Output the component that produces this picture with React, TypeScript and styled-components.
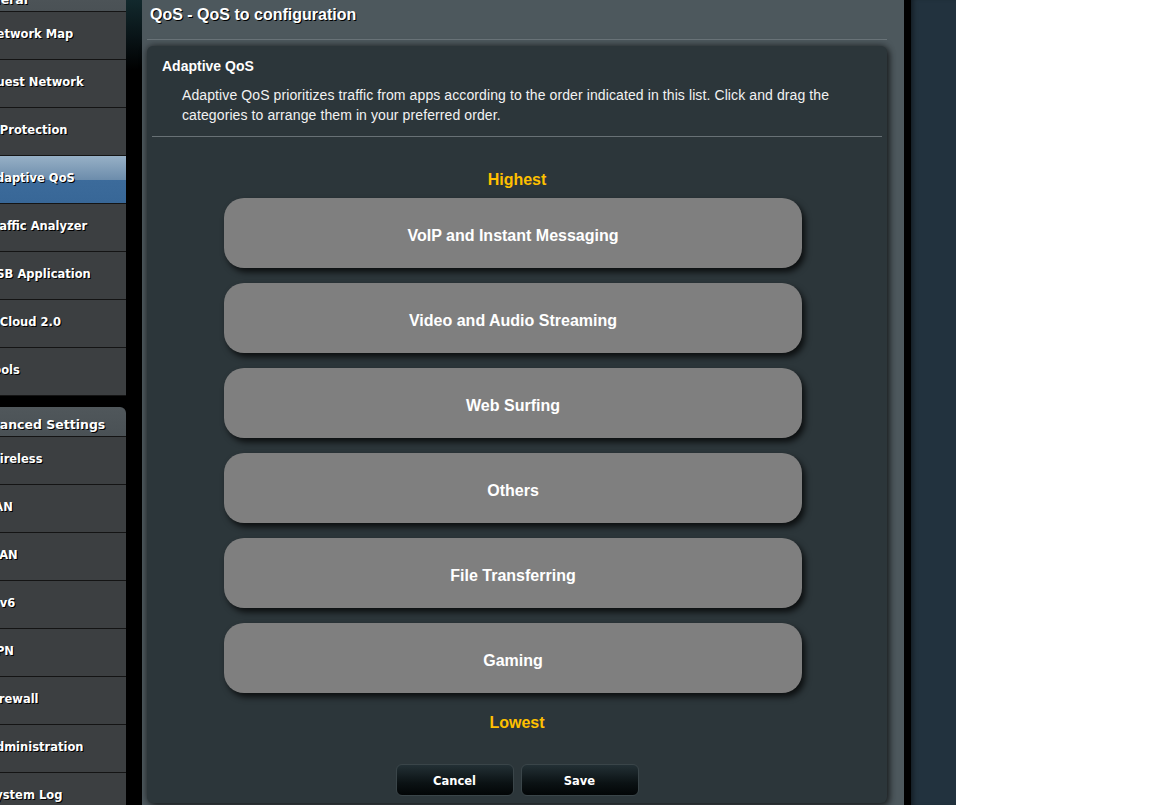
import styled, { createGlobalStyle } from "styled-components";

const GlobalStyle = createGlobalStyle`
  html, body {
    margin: 0;
    padding: 0;
    background: #ffffff;
    overflow: hidden;
  }
`;

const Page = styled.div`
  display: flex;
  width: 956px;
  height: 805px;
  overflow: hidden;
  background: #000;
`;

// ---- left menu ----

const Sidebar = styled.nav`
  width: 126px;
  flex-shrink: 0;
  overflow: hidden;
  display: flex;
  flex-direction: column;
  font-family: "DejaVu Sans", Verdana, sans-serif;
  font-weight: bold;
  color: #fff;
  text-shadow: 1px 1px 0 #000;
`;

const MenuHeader = styled.div<{ $first?: boolean }>`
  flex-shrink: 0;
  height: 29px;
  margin-top: ${(p) => (p.$first ? "-18px" : "0")};
  background: linear-gradient(#50575b, #4a5155);
  border-top-right-radius: 6px;
  border-bottom: 1px solid #141414;
  display: flex;
  align-items: center;
  font-size: 12.5px;
  white-space: nowrap;
  overflow: hidden;
`;

const HeaderLabel = styled.span`
  margin-left: -27px;
  padding-top: 5px;
`;

const MenuItem = styled.div<{ $active?: boolean }>`
  flex-shrink: 0;
  height: 47px;
  border-bottom: 1px solid #141414;
  background: ${(p) =>
    p.$active
      ? "linear-gradient(#97b0c6 0%, #6d8dac 50%, #3c6b9b 50%, #386797 100%)"
      : "#3c3f41"};
  display: flex;
  align-items: center;
  font-size: 11.5px;
  white-space: nowrap;
  overflow: hidden;
`;

const ItemLabel = styled.span`
  margin-left: -13px;
  padding-bottom: 4px;
`;

const MenuGap = styled.div`
  flex-shrink: 0;
  height: 11px;
`;

const Gutter = styled.div`
  width: 16px;
  flex-shrink: 0;
  background: linear-gradient(#12292d 0px, #081215 40px, #000 70px);
`;

// ---- main panel ----

const Panel = styled.main`
  width: 762px;
  flex-shrink: 0;
  box-sizing: border-box;
  padding: 0 17px 0 5px;
  background: #4d585d;
  font-family: "Liberation Sans", Arial, sans-serif;
  color: #fff;
`;

const TitleBar = styled.div`
  height: 40px;
  box-sizing: border-box;
  padding: 6px 0 0 3px;
  border-bottom: 1px solid #6a7479;
  font-size: 16px;
  font-weight: bold;
  text-shadow: 1px 1px 0 #000;
`;

const Card = styled.section`
  margin-top: 6px;
  background: #2c363a;
  border-radius: 6px;
  box-shadow: 0 0 7px rgba(0, 0, 0, 0.55), 3px 3px 6px rgba(0, 0, 0, 0.45);
  padding: 11px 5px 7px;
  display: flex;
  flex-direction: column;
`;

const CardTitle = styled.div`
  padding-left: 10px;
  font-size: 14px;
  font-weight: bold;
  line-height: 18px;
`;

const Description = styled.p`
  margin: 10px 0 0;
  padding: 0 45px 0 30px;
  font-size: 14px;
  line-height: 20px;
  letter-spacing: 0.1px;
  color: #f2f2f2;
`;

const Divider = styled.hr`
  margin: 11px 0 0;
  border: 0;
  border-top: 1px solid #687175;
`;

const PriorityList = styled.div`
  display: flex;
  flex-direction: column;
  align-items: center;
`;

const Bound = styled.div<{ $gap: number }>`
  margin-top: ${(p) => p.$gap}px;
  font-size: 16px;
  font-weight: bold;
  line-height: 20px;
  color: #ffc000;
`;

const CategoryStack = styled.div`
  margin-top: 8px;
  display: flex;
  flex-direction: column;
  gap: 15px;
`;

const Category = styled.div`
  width: 578px;
  height: 70px;
  box-sizing: border-box;
  padding-top: 6px;
  margin-right: 8px;
  border-radius: 20px;
  background: #7f7f7f;
  box-shadow: 3px 4px 6px rgba(0, 0, 0, 0.75);
  display: flex;
  align-items: center;
  justify-content: center;
  font-size: 16px;
  font-weight: bold;
  color: #fff;
  cursor: move;
`;

const Actions = styled.div`
  margin-top: 31px;
  display: flex;
  justify-content: center;
  gap: 7px;
`;

const Button = styled.button`
  width: 118px;
  height: 32px;
  padding-top: 3px;
  border: 1px solid #3a4549;
  border-radius: 6px;
  background: linear-gradient(#233035, #0b1214 60%, #020506);
  color: #fff;
  font-family: "DejaVu Sans", Verdana, sans-serif;
  font-size: 11.5px;
  font-weight: bold;
  cursor: pointer;
`;

// ---- right edge ----

const EdgeBlack = styled.div`
  width: 7px;
  flex-shrink: 0;
  background: #000;
`;

const EdgeBlue = styled.div`
  width: 45px;
  flex-shrink: 0;
  background: #22323e;
  box-shadow: inset 5px 0 5px -3px rgba(0, 0, 0, 0.45);
`;

const general = [
  "Network Map",
  "Guest Network",
  "AiProtection",
  "Adaptive QoS",
  "Traffic Analyzer",
  "USB Application",
  "AiCloud 2.0",
  "Tools",
];

const advanced = [
  "Wireless",
  "LAN",
  "WAN",
  "IPv6",
  "VPN",
  "Firewall",
  "Administration",
  "System Log",
];

const categories = [
  "VoIP and Instant Messaging",
  "Video and Audio Streaming",
  "Web Surfing",
  "Others",
  "File Transferring",
  "Gaming",
];

const App = () => {
  return (
    <>
      <GlobalStyle />
      <Page>
        <Sidebar>
          <MenuHeader $first>
            <HeaderLabel>General</HeaderLabel>
          </MenuHeader>
          {general.map((name) => (
            <MenuItem key={name} $active={name === "Adaptive QoS"}>
              <ItemLabel>{name}</ItemLabel>
            </MenuItem>
          ))}
          <MenuGap />
          <MenuHeader>
            <HeaderLabel>Advanced Settings</HeaderLabel>
          </MenuHeader>
          {advanced.map((name) => (
            <MenuItem key={name}>
              <ItemLabel>{name}</ItemLabel>
            </MenuItem>
          ))}
        </Sidebar>
        <Gutter />
        <Panel>
          <TitleBar>QoS - QoS to configuration</TitleBar>
          <Card>
            <CardTitle>Adaptive QoS</CardTitle>
            <Description>
              Adaptive QoS prioritizes traffic from apps according to the order
              indicated in this list. Click and drag the categories to arrange
              them in your preferred order.
            </Description>
            <Divider />
            <PriorityList>
              <Bound $gap={33}>Highest</Bound>
              <CategoryStack>
                {categories.map((c) => (
                  <Category key={c}>{c}</Category>
                ))}
              </CategoryStack>
              <Bound $gap={20}>Lowest</Bound>
            </PriorityList>
            <Actions>
              <Button>Cancel</Button>
              <Button>Save</Button>
            </Actions>
          </Card>
        </Panel>
        <EdgeBlack />
        <EdgeBlue />
      </Page>
    </>
  );
};

export default App;
